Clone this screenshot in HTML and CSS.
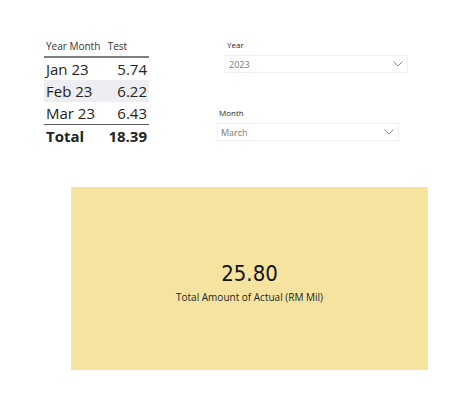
FILE: index.html
```html
<!DOCTYPE html>
<html lang="en">
<head>
    <meta charset="UTF-8">
    <title>Report</title>
    <link rel="stylesheet" href="styles.css">
</head>
<body>
    <div class="page">
        <div class="top">
            <table class="matrix">
                <thead>
                    <tr><th class="col-month">Year Month</th><th class="col-test">Test</th></tr>
                </thead>
                <tbody>
                    <tr><td>Jan 23</td><td class="num">5.74</td></tr>
                    <tr class="shaded"><td>Feb 23</td><td class="num">6.22</td></tr>
                    <tr><td>Mar 23</td><td class="num">6.43</td></tr>
                </tbody>
                <tfoot>
                    <tr><td>Total</td><td class="num">18.39</td></tr>
                </tfoot>
            </table>

            <div class="slicers">
                <div class="slicer slicer-year">
                    <div class="slicer-label">Year</div>
                    <div class="slicer-box">
                        <span>2023</span>
                        <svg class="chevron" width="10" height="6" viewBox="0 0 10 6"><path d="M0.5 0.5 L5 5 L9.5 0.5" fill="none" stroke="#8a8a8a" stroke-width="1"/></svg>
                    </div>
                </div>
                <div class="slicer slicer-month">
                    <div class="slicer-label">Month</div>
                    <div class="slicer-box">
                        <span>March</span>
                        <svg class="chevron" width="10" height="6" viewBox="0 0 10 6"><path d="M0.5 0.5 L5 5 L9.5 0.5" fill="none" stroke="#8a8a8a" stroke-width="1"/></svg>
                    </div>
                </div>
            </div>
        </div>

        <div class="card">
            <div class="card-value">25.80</div>
            <div class="card-label">Total Amount of Actual (RM Mil)</div>
        </div>
    </div>
</body>
</html>
```

FILE: styles.css
```css
body {
    margin: 0;
    background-color: #ffffff;
    font-family: "Open Sans", "Noto Sans", sans-serif;
    color: #252423;
}
.page {
    width: 474px;
    height: 418px;
}
.top {
    display: flex;
    padding-top: 35px;
}
.matrix {
    border-collapse: collapse;
    margin-left: 44px;
    width: 105px;
}
.matrix th {
    font-size: 10px;
    font-weight: normal;
    color: #333;
    text-align: left;
    height: 21px;
    padding: 0 2px;
    border-bottom: 2px solid #7f7f7f;
    white-space: nowrap;
}
.matrix th.col-test {
    padding-left: 3px;
}
.matrix td {
    font-size: 15px;
    height: 22px;
    padding: 0 2px;
    line-height: 22px;
    white-space: nowrap;
}
.matrix td.num {
    text-align: right;
}
.matrix tr.shaded td {
    background-color: #eceef1;
}
.matrix tfoot td {
    font-weight: bold;
    height: 22px;
    border-top: 1.5px solid #5f5f5f;
}
.slicers {
    display: flex;
    flex-direction: column;
}
.slicer-year {
    margin-left: 76px;
    margin-top: 4px;
    width: 183px;
}
.slicer-month {
    margin-left: 68px;
    margin-top: 34px;
    width: 182px;
}
.slicer-label {
    font-size: 8px;
    color: #252423;
    padding-left: 2px;
    height: 16px;
    line-height: 12px;
}
.slicer-box {
    display: flex;
    align-items: center;
    justify-content: space-between;
    height: 16px;
    border: 1px solid #f0f0f0;
    padding: 0 3px 0 3px;
    font-size: 9px;
    color: #7a7a7a;
}
.chevron {
    margin-right: 1px;
}
.card {
    margin-left: 71px;
    margin-top: 40px;
    width: 357px;
    height: 183px;
    box-sizing: border-box;
    padding-top: 74px;
    background-color: #f6e39f;
    display: flex;
    flex-direction: column;
    align-items: center;
}
.card-value {
    font-family: "DejaVu Sans Condensed", "DejaVu Sans", sans-serif;
    font-size: 22px;
    color: #111;
    line-height: 26px;
}
.card-label {
    font-size: 10px;
    color: #252423;
    margin-top: 3px;
}
```
